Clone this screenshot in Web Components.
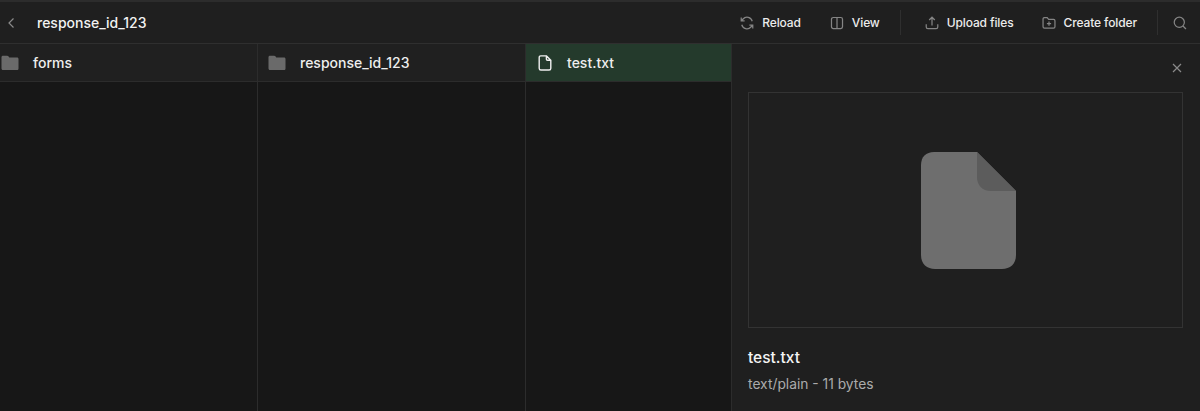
<!DOCTYPE html>
<html>
<head>
<meta charset="utf-8">
<style>
  html, body { margin: 0; height: 100%; background: #1f1f1f; overflow: hidden; }
  body { font-family: Inter, "Liberation Sans", sans-serif; color: #ededed; }
  file-browser { height: 411px; }
</style>
</head>
<body>
<file-browser>
  <top-bar slot="bar" title-text="response_id_123">
    <bar-button label="Reload"><svg viewBox="0 0 16 16"><path d="M14 6A6.2 6.2 0 0 0 3.5 3.4L1.6 5.4M1.4 1.6v3.9h3.9M2 10a6.2 6.2 0 0 0 10.5 2.6l1.9-2M14.6 14.4v-3.9h-3.9"/></svg></bar-button>
    <bar-button label="View" style="margin-left:29px"><svg viewBox="0 0 16 16"><rect x="1.7" y="1.7" width="12.6" height="12.6" rx="2"/><path d="M8 1.7v12.6"/></svg></bar-button>
    <bar-sep style="margin:0 24px 0 20px"></bar-sep>
    <bar-button label="Upload files"><svg viewBox="0 0 16 16"><path d="M8 10.8V1.6M4.8 4.6L8 1.4l3.2 3.2M1.4 9.4v3.2c0 1.2.7 1.9 1.9 1.9h9.4c1.2 0 1.9-.7 1.9-1.9V9.4"/></svg></bar-button>
    <bar-button label="Create folder" style="margin-left:28px"><svg viewBox="0 0 16 16"><path d="M1.2 3.4c0-1 .6-1.6 1.6-1.6h3.1l1.7 2h5.6c1 0 1.6.6 1.6 1.6v6.8c0 1-.6 1.6-1.6 1.6H2.8c-1 0-1.6-.6-1.6-1.6zM8 6.4v4.8M5.6 8.8h4.8"/></svg></bar-button>
    <bar-sep style="margin:0 15px 0 20px"></bar-sep>
    <bar-button><svg viewBox="0 0 16 16"><circle cx="7.2" cy="7.2" r="5.8"/><path d="M11.4 11.4l3.4 3.4"/></svg></bar-button>
  </top-bar>
  <file-column slot="col" style="width:258px" name="forms" kind="folder" clip></file-column>
  <file-column slot="col" style="width:268px" name="response_id_123" kind="folder"></file-column>
  <file-column slot="col" style="width:206px" name="test.txt" kind="file" selected></file-column>
  <file-preview slot="preview" name="test.txt" meta="text/plain - 11 bytes"></file-preview>
</file-browser>

<script>
class FileBrowser extends HTMLElement {
  constructor() {
    super();
    this.attachShadow({ mode: 'open' });
    this.shadowRoot.innerHTML = `
      <style>
        :host { display: flex; flex-direction: column; width: 1200px; }
        .cols { display: flex; flex: 1; min-height: 0; }
      </style>
      <slot name="bar"></slot>
      <div class="cols">
        <slot name="col"></slot>
        <slot name="preview"></slot>
      </div>
    `;
  }
}

class TopBar extends HTMLElement {
  constructor() {
    super();
    this.attachShadow({ mode: 'open' });
    this.shadowRoot.innerHTML = `
      <style>
        :host {
          display: flex; align-items: center; height: 44px; box-sizing: border-box;
          background: #1f1f1f; border-top: 2px solid #2c2c2c; border-bottom: 1px solid #2f2f2f;
          padding: 0 13px 0 7px;
        }
        svg { width: 9px; height: 12px; fill: none; stroke: #8a8a8a; stroke-width: 1.2; margin-right: 21px; }
        .title { font-size: 14px; font-weight: 500; color: #f2f2f2; flex: 1; }
      </style>
      <svg viewBox="0 0 9 12"><path d="M6.5 1.5L2 6l4.5 4.5"/></svg>
      <span class="title">${this.getAttribute('title-text')}</span>
      <slot></slot>
    `;
  }
}

class BarButton extends HTMLElement {
  constructor() {
    super();
    this.attachShadow({ mode: 'open' });
    const label = this.getAttribute('label');
    this.shadowRoot.innerHTML = `
      <style>
        :host { display: inline-flex; align-items: center; gap: 8px; font-size: 12px; letter-spacing: -0.12px; font-weight: 500; color: #ececec; }
        ::slotted(svg) { width: 14px; height: 14px; fill: none; stroke: #858585; stroke-width: 1.4; }
      </style>
      <slot></slot>${label ? `<span>${label}</span>` : ''}
    `;
  }
}

class BarSep extends HTMLElement {
  constructor() {
    super();
    this.attachShadow({ mode: 'open' });
    this.shadowRoot.innerHTML = `
      <style>:host { display: block; width: 1px; height: 25px; background: #2f2f2f; }</style>
    `;
  }
}

class FileColumn extends HTMLElement {
  constructor() {
    super();
    this.attachShadow({ mode: 'open' });
    const kind = this.getAttribute('kind');
    const selected = this.hasAttribute('selected');
    const icon = kind === 'folder'
      ? `<svg class="icon" viewBox="0 0 18 16"><path fill="#6a6a6a" d="M0.5 2.2C.5 1.2 1.1.7 2 .7h4.2c.6 0 .9.2 1.2.6l.9 1.1h7.7c1 0 1.5.6 1.5 1.5v9.6c0 1-.6 1.5-1.5 1.5H2c-1 0-1.5-.6-1.5-1.5z"/></svg>`
      : `<svg class="icon" viewBox="0 0 14 16"><path fill="none" stroke="#f0f0f0" stroke-width="1.4" d="M1.2 2.6C1.2 1.5 1.8.9 2.8.9h5.7l4.3 4.4v7.9c0 1.1-.6 1.8-1.7 1.8H2.9c-1.1 0-1.7-.7-1.7-1.8zM8.4 1v3.2c0 .7.4 1.1 1.1 1.1h3.2"/></svg>`;
    this.shadowRoot.innerHTML = `
      <style>
        :host { display: block; flex: none; box-sizing: border-box; background: #171717; border-right: 1px solid #2c2c2c; overflow: hidden; }
        .row {
          display: flex; align-items: center; height: 38px; box-sizing: border-box;
          background: ${selected ? '#243a2c' : '#202020'};
          border-bottom: 1px solid #2c2c2c;
          padding-left: ${kind === 'file' ? '12px' : '10px'};
          font-size: 14px; font-weight: 500; color: #eeeeee;
        }
        :host([clip]) .row { padding-left: 1px; }
        .icon { width: 18px; height: 16px; margin-right: 14px; flex: none; }
        .row svg[viewBox="0 0 14 16"] { width: 14px; margin-right: 15px; }
      </style>
      <div class="row">${icon}<span>${this.getAttribute('name')}</span></div>
    `;
  }
}

class FilePreview extends HTMLElement {
  constructor() {
    super();
    this.attachShadow({ mode: 'open' });
    this.shadowRoot.innerHTML = `
      <style>
        :host { display: flex; flex-direction: column; flex: 1; min-width: 0; box-sizing: border-box; background: #1f1f1f; padding: 0 17px 0 16px; }
        .close { align-self: flex-end; height: 48px; display: flex; align-items: center; margin-right: 1px; }
        .close svg { width: 10px; height: 10px; stroke: #8a8a8a; stroke-width: 1.2; fill: none; }
        .box { height: 236px; box-sizing: border-box; border: 1px solid #333333; display: flex; align-items: center; justify-content: center; padding-left: 5px; }
        .name { font-size: 15.5px; font-weight: 500; color: #f4f4f4; margin-top: 21px; line-height: 17px; }
        .meta { font-size: 13.8px; color: #ababab; margin-top: 10px; line-height: 16px; }
      </style>
      <div class="close"><svg viewBox="0 0 10 10"><path d="M1 1l8 8M9 1l-8 8"/></svg></div>
      <div class="box">
        <svg width="95" height="117" viewBox="0 0 95 117">
          <path fill="#6e6e6e" d="M13 0H56L95 39V103C95 112 89 117 81 117H14C6 117 0 112 0 103V13C0 5 5 0 13 0Z"/>
          <path fill="#5c5c5c" d="M56 0L95 39H70C61 39 56 33 56 25Z"/>
        </svg>
      </div>
      <div class="name">${this.getAttribute('name')}</div>
      <div class="meta">${this.getAttribute('meta')}</div>
    `;
  }
}

customElements.define('file-browser', FileBrowser);
customElements.define('top-bar', TopBar);
customElements.define('bar-button', BarButton);
customElements.define('bar-sep', BarSep);
customElements.define('file-column', FileColumn);
customElements.define('file-preview', FilePreview);
</script>
</body>
</html>
